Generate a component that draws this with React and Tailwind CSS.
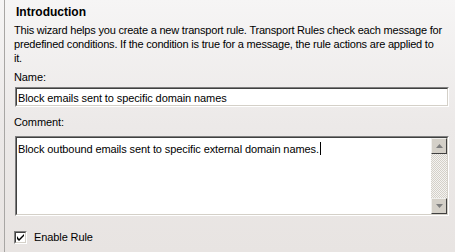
import React from 'react';

function Sunken({ className = '', children }) {
  return (
    <div className={`border border-t-[#7f7f7f] border-l-[#7f7f7f] border-b-[#ffffff] border-r-[#ffffff] ${className}`}>
      <div className="h-full border border-t-[#404040] border-l-[#404040] border-b-[#d4d0c8] border-r-[#d4d0c8] bg-white">
        {children}
      </div>
    </div>
  );
}

function ScrollButton({ down }) {
  return (
    <div className="flex h-[16px] w-[16px] items-center justify-center border border-t-[#f0efec] border-l-[#f0efec] border-b-[#404040] border-r-[#404040] bg-[#d4d0c8]">
      <svg width="7" height="4" viewBox="0 0 7 4">
        {down ? <path d="M0 0h7L3.5 4z" fill="#7f7f7f" /> : <path d="M0 4h7L3.5 0z" fill="#7f7f7f" />}
      </svg>
    </div>
  );
}

export default function App() {
  return (
    <div
      className="relative h-[252px] w-[455px] overflow-hidden bg-gradient-to-b from-[#f6f5f5] via-[#ece9e8] to-[#e8e4e2] text-[11px] leading-[14px] text-black"
      style={{ fontFamily: '"Liberation Sans", Arial, sans-serif' }}
    >
      <div className="ml-[4px] h-full border-l border-l-[#a8a6a4] pl-[10px] pr-[6px]">
        <div className="pl-[1px] pt-[5px] text-[12px] font-bold leading-[14px]">Introduction</div>
        <p className="mt-[4px] -ml-[1px] whitespace-nowrap tracking-[-0.2px]">
          This wizard helps you create a new transport rule. Transport Rules check each message for
          <br />
          predefined conditions. If the condition is true for a message, the rule actions are applied to
          <br />
          it.
        </p>
        <div className="mt-[5px] -ml-[1px] tracking-[-0.1px]">Name:</div>
        <Sunken className="mt-[3px] h-[20px] w-[434px]">
          <div className="px-[1px] pt-[2px] tracking-[-0.1px]">Block emails sent to specific domain names</div>
        </Sunken>
        <div className="mt-[8px] -ml-[1px] tracking-[-0.1px]">Comment:</div>
        <Sunken className="mt-[7px] h-[80px] w-[434px]">
          <div className="flex h-full">
            <div className="flex-1 px-[1px] pt-[2px] tracking-[-0.1px]">
              Block outbound emails sent to specific external domain names.<span className="ml-[1px] inline-block h-[13px] w-px translate-y-[2px] bg-black" />
            </div>
            <div
              className="flex w-[16px] flex-col justify-between"
              style={{
                backgroundColor: '#f4f3f1',
                backgroundImage:
                  'linear-gradient(45deg, #d4d0c8 25%, transparent 25%, transparent 75%, #d4d0c8 75%), linear-gradient(45deg, #d4d0c8 25%, transparent 25%, transparent 75%, #d4d0c8 75%)',
                backgroundSize: '2px 2px',
                backgroundPosition: '0 0, 1px 1px',
              }}
            >
              <ScrollButton />
              <ScrollButton down />
            </div>
          </div>
        </Sunken>
        <div className="mt-[14px] flex items-center gap-[7px] -ml-[1px]">
          <div className="flex h-[13px] w-[13px] items-center justify-center border border-t-[#7f7f7f] border-l-[#7f7f7f] border-b-[#ffffff] border-r-[#ffffff]">
            <div className="flex h-full w-full items-center justify-center border border-t-[#404040] border-l-[#404040] border-b-[#d4d0c8] border-r-[#d4d0c8] bg-white">
              <svg width="7" height="7" viewBox="0 0 7 7">
                <path d="M0 2v3l2 2 5-5V-0L2 5z" fill="#000" />
              </svg>
            </div>
          </div>
          <span className="tracking-[-0.1px]">Enable Rule</span>
        </div>
      </div>
    </div>
  );
}
